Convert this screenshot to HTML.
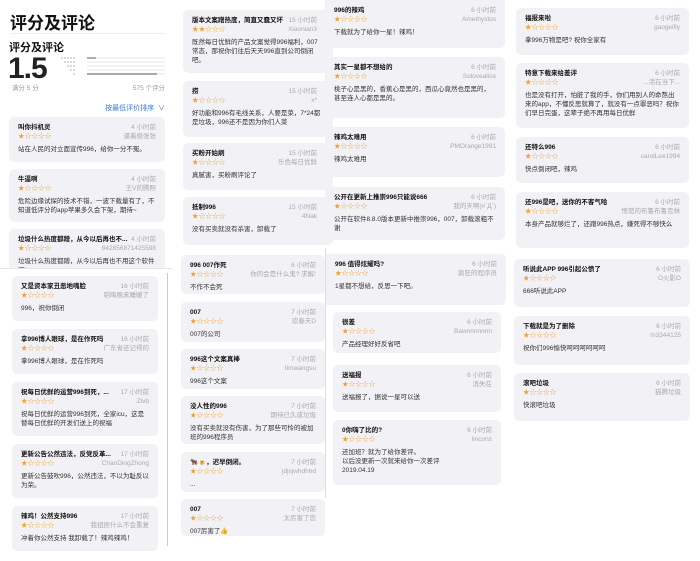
<!DOCTYPE html>
<html><head><meta charset="utf-8"><style>
*{margin:0;padding:0;box-sizing:border-box}
body{width:700px;height:561px;background:#fff;position:relative;overflow:hidden;font-family:"Liberation Sans","Noto Sans CJK SC",sans-serif;color:#222}
.p{position:absolute;background:#fff;overflow:hidden}
.c{position:absolute;background:#f2f2f6;border-radius:5px;padding:6px 9px;font-size:6.5px;line-height:9px;overflow:hidden}
.t{font-weight:bold;color:#111;white-space:nowrap;overflow:hidden;padding-right:40px}
.d{position:absolute;right:9px;top:6px;color:#aaa}
.u{position:absolute;right:9px;top:15px;color:#aaa}
.s{color:#f0a030;font-size:6.5px;letter-spacing:.2px}
.b{margin-top:4px;color:#333}
</style></head><body>

<!-- column 1 top -->
<div style="position:absolute;left:10px;top:9px;font-size:17px;font-weight:bold;color:#111">评分及评论</div>
<div style="position:absolute;left:10px;top:33px;width:155px;border-top:1px solid #eee"></div>
<div style="position:absolute;left:9px;top:39px;font-size:11px;font-weight:bold;color:#111">评分及评论</div>
<div style="position:absolute;left:8px;top:52px;font-size:30px;font-weight:bold;color:#222;letter-spacing:-1px">1.5</div>
<div style="position:absolute;left:12px;top:82px;font-size:6.5px;color:#999">满分 5 分</div>
<div style="position:absolute;right:535px;top:82px;font-size:6.5px;color:#999">575 个评分</div>
<svg style="position:absolute;left:60px;top:55px" width="106" height="24">
<g fill="#aaa"><circle cx="2" cy="3" r=".8"/><circle cx="5" cy="3" r=".8"/><circle cx="8" cy="3" r=".8"/><circle cx="11" cy="3" r=".8"/><circle cx="14" cy="3" r=".8"/>
<circle cx="5" cy="7" r=".8"/><circle cx="8" cy="7" r=".8"/><circle cx="11" cy="7" r=".8"/><circle cx="14" cy="7" r=".8"/>
<circle cx="8" cy="11" r=".8"/><circle cx="11" cy="11" r=".8"/><circle cx="14" cy="11" r=".8"/>
<circle cx="11" cy="15" r=".8"/><circle cx="14" cy="15" r=".8"/><circle cx="14" cy="19" r=".8"/></g>
<g stroke="#e4e4e4" stroke-width="1"><line x1="27" y1="3" x2="105" y2="3"/><line x1="27" y1="7" x2="105" y2="7"/><line x1="27" y1="11" x2="105" y2="11"/><line x1="27" y1="15" x2="105" y2="15"/><line x1="27" y1="19" x2="105" y2="19"/></g>
<g stroke="#777" stroke-width="1.2"><line x1="27" y1="3" x2="36" y2="3"/><line x1="27" y1="19" x2="97" y2="19"/></g>
</svg>
<div style="position:absolute;right:535px;top:103px;font-size:7px;color:#3a7be0">按最低评价排序 &nbsp;∨</div>

<div class="c" style="left:9px;top:117px;width:156px;height:45px"><div class="t">叫你抖机灵</div><div class="d">4 小时前</div><div class="s">★☆☆☆☆</div><div class="u">逼着极张张</div><div class="b">站在人民的对立面宣传996，给你一分不冤。</div></div>
<div class="c" style="left:9px;top:169px;width:156px;height:53px"><div class="t">牛逼啊</div><div class="d">4 小时前</div><div class="s">★☆☆☆☆</div><div class="u">王V的腾照</div><div class="b">危险边缘试探的技术不错，一波下载量有了，不知道低评分的app苹果多久会下架，期待~</div></div>
<div class="c" style="left:9px;top:229px;width:156px;height:50px"><div class="t">垃圾什么热度都蹭，从今以后再也不...</div><div class="d">4 小时前</div><div class="s">★☆☆☆☆</div><div class="u">8428568714255​98</div><div class="b">垃圾什么热度都蹭，从今以后再也不用这个软件了!</div></div>

<!-- column 1 bottom panel -->
<div class="p" style="left:0;top:268px;width:172px;height:293px;border-top:1px solid #e6e6e6">
<div style="position:absolute;left:167px;top:4px;height:273px;border-left:1px solid #ccc"></div>
<div class="c" style="left:12px;top:7px;width:146px;height:45px"><div class="t">又是资本家丑恶地嘴脸</div><div class="d">16 小时前</div><div class="s">★☆☆☆☆</div><div class="u">韬晦晚来睡暖了</div><div class="b">996，祝你倒闭</div></div>
<div class="c" style="left:12px;top:60px;width:146px;height:45px"><div class="t">拿996博人眼球，是在作死吗</div><div class="d">16 小时前</div><div class="s">★☆☆☆☆</div><div class="u">广东省还记得的</div><div class="b">拿996博人眼球，是在作死吗</div></div>
<div class="c" style="left:12px;top:113px;width:146px;height:54px"><div class="t">祝每日优鲜的运营996到死，...</div><div class="d">17 小时前</div><div class="s">★☆☆☆☆</div><div class="u">Zlvb</div><div class="b">祝每日优鲜的运营996到死，全家icu，这是替每日优鲜的开发们送上的祝福</div></div>
<div class="c" style="left:12px;top:175px;width:146px;height:54px"><div class="t">更新公告公然违法，反党反革...</div><div class="d">17 小时前</div><div class="s">★☆☆☆☆</div><div class="u">ChanDingZhong</div><div class="b">更新公告鼓吹996，公然违法，不以为耻反以为荣。</div></div>
<div class="c" style="left:12px;top:237px;width:146px;height:45px"><div class="t">辣鸡！公然支持996</div><div class="d">17 小时前</div><div class="s">★☆☆☆☆</div><div class="u">我扭捏什么不会重复</div><div class="b">冲着你公然支持 我卸载了！辣鸡辣鸡！</div></div>
</div>

<!-- column 2 top -->
<div class="c" style="left:183px;top:10px;width:150px;height:63px"><div class="t">版本文案蹭热度，简直又蠢又坏</div><div class="d" style="right:16px">15 小时前</div><div class="s">★★☆☆☆</div><div class="u" style="right:16px">Xiaonian3</div><div class="b">既然每日优鲜的产品文案觉得996福利，007常态，那祝你们往后天天996直到公司倒闭吧。</div></div>
<div class="c" style="left:183px;top:81px;width:150px;height:56px"><div class="t">捞</div><div class="d" style="right:16px">15 小时前</div><div class="s">★☆☆☆☆</div><div class="u" style="right:16px">x*</div><div class="b">好功能和996有毛线关系，人要是菜，7*24都是垃圾，996还不是因为你们人菜</div></div>
<div class="c" style="left:183px;top:143px;width:150px;height:47px"><div class="t">买粉开始刷</div><div class="d" style="right:16px">15 小时前</div><div class="s">★☆☆☆☆</div><div class="u" style="right:16px">乐色每日优鲜</div><div class="b">真腻害，买粉刷评论了</div></div>
<div class="c" style="left:183px;top:197px;width:150px;height:48px"><div class="t">抵制996</div><div class="d" style="right:16px">15 小时前</div><div class="s">★☆☆☆☆</div><div class="u" style="right:16px">4Nak</div><div class="b">没有买卖就没有杀害，卸载了</div></div>

<!-- column 2 bottom panel -->
<div class="p" style="left:177px;top:251px;width:148px;height:290px">
<div class="c" style="left:4px;top:4px;width:144px;height:39px"><div class="t">996 007作死</div><div class="d">6 小时前</div><div class="s">★☆☆☆☆</div><div class="u">你的会是什么鬼? 求解!</div><div class="b">不作不会死</div></div>
<div class="c" style="left:4px;top:51px;width:144px;height:40px"><div class="t">007</div><div class="d">7 小时前</div><div class="s">★☆☆☆☆</div><div class="u">欢春天D</div><div class="b">007的公司</div></div>
<div class="c" style="left:4px;top:98px;width:144px;height:40px"><div class="t">996这个文案真棒</div><div class="d">7 小时前</div><div class="s">★☆☆☆☆</div><div class="u">timwangsu</div><div class="b">996这个文案</div></div>
<div class="c" style="left:4px;top:145px;width:144px;height:48px"><div class="t">没人性的996</div><div class="d">7 小时前</div><div class="s">★☆☆☆☆</div><div class="u">期待已久成垃圾</div><div class="b">没有买卖就没有伤害，为了那些可怜的被加班的996程序员</div></div>
<div class="c" style="left:4px;top:201px;width:144px;height:40px"><div class="t">🐂🍺，迟早倒闭。</div><div class="d">7 小时前</div><div class="s">★☆☆☆☆</div><div class="u">jdjsjwhdhhd</div><div class="b">...</div></div>
<div class="c" style="left:4px;top:248px;width:144px;height:37px"><div class="t">007</div><div class="d">7 小时前</div><div class="s">★☆☆☆☆</div><div class="u">太厉害了您</div><div class="b">007厉害了👍</div></div>
</div>

<!-- column 3 top -->
<div class="c" style="left:325px;top:-4px;width:180px;height:52px;padding-top:10px"><div class="t">996的辣鸡</div><div class="d" style="top:10px">6 小时前</div><div class="s">★☆☆☆☆</div><div class="u" style="top:19px">Amethystos</div><div class="b">下载就为了给你一星！辣鸡！</div></div>
<div class="c" style="left:325px;top:57px;width:180px;height:61px"><div class="t">其实一星都不想给的</div><div class="d">6 小时前</div><div class="s">★☆☆☆☆</div><div class="u">Solovealice</div><div class="b">桃子心是黑的，香蕉心是黑的，西瓜心竟然也是黑的，甚至连人心都是黑的。</div></div>
<div class="c" style="left:325px;top:127px;width:180px;height:50px"><div class="t">辣鸡太难用</div><div class="d">6 小时前</div><div class="s">★☆☆☆☆</div><div class="u">PMOrange1991</div><div class="b">辣鸡太难用</div></div>
<div class="c" style="left:325px;top:187px;width:180px;height:53px"><div class="t">公开在更新上推崇996只能说666</div><div class="d">6 小时前</div><div class="s">★☆☆☆☆</div><div class="u">我的天啊(#`Д´)</div><div class="b">公开在软件8.8.0版本更新中推崇996，007，卸载滚粗不谢</div></div>

<!-- column 3 bottom panel -->
<div class="p" style="left:325px;top:248px;width:182px;height:250px;border-left:1px solid #ddd">
<div class="c" style="left:0;top:6px;width:180px;height:51px;border-radius:0 5px 5px 0"><div class="t">996 值得炫耀吗?</div><div class="d">6 小时前</div><div class="s">★☆☆☆☆</div><div class="u">疯狂的程序员</div><div class="b">1星都不想给，反思一下吧。</div></div>
<div class="c" style="left:7px;top:64px;width:168px;height:41px"><div class="t">很差</div><div class="d">6 小时前</div><div class="s">★☆☆☆☆</div><div class="u">Bawnnnnnnn</div><div class="b">产品经理好好反省吧</div></div>
<div class="c" style="left:7px;top:117px;width:168px;height:47px"><div class="t">送福报</div><div class="d">6 小时前</div><div class="s">★☆☆☆☆</div><div class="u">消失在</div><div class="b">送福报了，据说一星可以送</div></div>
<div class="c" style="left:7px;top:172px;width:168px;height:65px"><div class="t">0你嗨了比的?</div><div class="d">6 小时前</div><div class="s">★☆☆☆☆</div><div class="u">linconz</div><div class="b">还加班？就为了给你差评。<br>以后没更新一次就来给你一次差评<br>2019.04.19</div></div>
</div>

<!-- column 4 -->
<div class="c" style="left:516px;top:8px;width:173px;height:47px"><div class="t">福报来啦</div><div class="d">6 小时前</div><div class="s">★☆☆☆☆</div><div class="u">gaogeifiy</div><div class="b">拿996万物是吧? 祝你全家有</div></div>
<div class="c" style="left:516px;top:63px;width:173px;height:65px"><div class="t">特意下载来给差评</div><div class="d">6 小时前</div><div class="s">★☆☆☆☆</div><div class="u">...活在当下...</div><div class="b">也是没有打开，怕脏了我的手，你们用别人的命熬出来的app，不懂反思就算了，就没有一点罪恶吗？祝你们早日完蛋，这辈子绝不再用每日优鲜</div></div>
<div class="c" style="left:516px;top:137px;width:173px;height:46px"><div class="t">还特么996</div><div class="d">6 小时前</div><div class="s">★☆☆☆☆</div><div class="u">carolLee1994</div><div class="b">快点倒闭吧，辣鸡</div></div>
<div class="c" style="left:516px;top:192px;width:173px;height:56px"><div class="t">还996是吧，送你的不客气哈</div><div class="d">6 小时前</div><div class="s">★☆☆☆☆</div><div class="u">愤怒的布鲁布鲁克林</div><div class="b">本身产品就够烂了，还蹭996热点，嫌死得不够快么</div></div>
<div class="c" style="left:514px;top:259px;width:176px;height:48px"><div class="t">听说此APP 996引起公愤了</div><div class="d">6 小时前</div><div class="s">★☆☆☆☆</div><div class="u">O火影O</div><div class="b">666听说此APP</div></div>
<div class="c" style="left:514px;top:316px;width:176px;height:49px"><div class="t">下载就是为了删除</div><div class="d">6 小时前</div><div class="s">★☆☆☆☆</div><div class="u">m3344125</div><div class="b">祝你们996愉快呵呵呵呵呵呵</div></div>
<div class="c" style="left:514px;top:373px;width:176px;height:48px"><div class="t">滚吧垃圾</div><div class="d">6 小时前</div><div class="s">★☆☆☆☆</div><div class="u">猫腾垃圾</div><div class="b">快滚吧垃圾</div></div>

</body></html>
